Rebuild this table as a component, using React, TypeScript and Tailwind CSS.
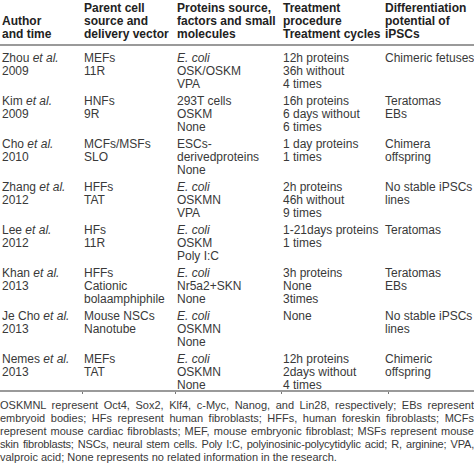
import React from 'react';

type Row = {
  author: React.ReactNode[];
  parent: React.ReactNode[];
  proteins: React.ReactNode[];
  treatment: React.ReactNode[];
  potential: React.ReactNode[];
};

const etal = <i>et al.</i>;
const ecoli = <i>E. coli</i>;

const rows: Row[] = [
  {
    author: [<>Zhou {etal}</>, '2009'],
    parent: ['MEFs', '11R'],
    proteins: [ecoli, 'OSK/OSKM', 'VPA'],
    treatment: ['12h proteins', '36h without', '4 times'],
    potential: ['Chimeric fetuses'],
  },
  {
    author: [<>Kim {etal}</>, '2009'],
    parent: ['HNFs', '9R'],
    proteins: ['293T cells', 'OSKM', 'None'],
    treatment: ['16h proteins', '6 days without', '6 times'],
    potential: ['Teratomas', 'EBs'],
  },
  {
    author: [<>Cho {etal}</>, '2010'],
    parent: ['MCFs/MSFs', 'SLO'],
    proteins: ['ESCs-', 'derivedproteins', 'None'],
    treatment: ['1 day proteins', '1 times'],
    potential: ['Chimera', 'offspring'],
  },
  {
    author: [<>Zhang {etal}</>, '2012'],
    parent: ['HFFs', 'TAT'],
    proteins: [ecoli, 'OSKMN', 'VPA'],
    treatment: ['2h proteins', '46h without', '9 times'],
    potential: ['No stable iPSCs', 'lines'],
  },
  {
    author: [<>Lee {etal}</>, '2012'],
    parent: ['HFs', '11R'],
    proteins: [ecoli, 'OSKM', 'Poly I:C'],
    treatment: ['1-21days proteins', '1 times'],
    potential: ['Teratomas'],
  },
  {
    author: [<>Khan {etal}</>, '2013'],
    parent: ['HFFs', 'Cationic', 'bolaamphiphile'],
    proteins: [ecoli, 'Nr5a2+SKN', 'None'],
    treatment: ['3h proteins', 'None', '3times'],
    potential: ['Teratomas', 'EBs'],
  },
  {
    author: [<>Je Cho {etal}</>, '2013'],
    parent: ['Mouse NSCs', 'Nanotube'],
    proteins: [ecoli, 'OSKMN', 'None'],
    treatment: ['None'],
    potential: ['No stable iPSCs', 'lines'],
  },
  {
    author: [<>Nemes {etal}</>, '2013'],
    parent: ['MEFs', 'TAT'],
    proteins: [ecoli, 'OSKMN', 'None'],
    treatment: ['12h proteins', '2days without', '4 times'],
    potential: ['Chimeric', 'offspring'],
  },
];

const headers: string[][] = [
  ['', 'Author', 'and time'],
  ['Parent cell', 'source and', 'delivery vector'],
  ['Proteins source,', 'factors and small', 'molecules'],
  ['Treatment', 'procedure', 'Treatment cycles'],
  ['Differentiation', 'potential of', 'iPSCs'],
];

const footnote = [
  'OSKMNL represent Oct4, Sox2, Klf4, c-Myc, Nanog, and Lin28, respectively; EBs represent',
  'embryoid bodies; HFs represent human fibroblasts; HFFs, human foreskin fibroblasts; MCFs',
  'represent mouse cardiac fibroblasts; MEF, mouse embryonic fibroblast; MSFs represent mouse',
];

const grid = 'grid grid-cols-[82px_93px_106px_102px_91px]';

const Cell: React.FC<{ lines: React.ReactNode[] }> = ({ lines }) => (
  <div className="pl-[2px] whitespace-nowrap">
    {lines.map((l, i) => (
      <div key={i} className="h-[13px]">{l}</div>
    ))}
  </div>
);

const App: React.FC = () => {
  return (
    <div className="w-[474px] h-[476px] bg-white overflow-hidden text-[12px] leading-[13px] text-[#393939] font-['Liberation_Sans',Arial,sans-serif]">
      {/* Header */}
      <div className={`${grid} pt-[2px] pb-[3px] font-bold text-[#222]`}>
        {headers.map((h, i) => (
          <Cell key={i} lines={h} />
        ))}
      </div>
      <div className="h-[2px] bg-[#9a9a9a]" />

      {/* Body */}
      {rows.map((r, i) => (
        <div key={i} className={`${grid} h-[43px] pt-[6px]`}>
          <Cell lines={r.author} />
          <Cell lines={r.parent} />
          <Cell lines={r.proteins} />
          <Cell lines={r.treatment} />
          <Cell lines={r.potential} />
        </div>
      ))}

      <div className="relative h-[2px] bg-[#9a9a9a]">
        <span className="absolute left-[82px] top-[2px] w-[1px] h-[2px] bg-[#777]" />
        <span className="absolute left-[175px] top-[2px] w-[1px] h-[2px] bg-[#777]" />
        <span className="absolute left-[281px] top-[2px] w-[1px] h-[2px] bg-[#777]" />
        <span className="absolute left-[388px] top-[2px] w-[1px] h-[2px] bg-[#777]" />
      </div>

      {/* Footnote */}
      <div className="pt-[7px] text-[11px] leading-[13px]">
        {footnote.map((t, i) => (
          <div key={i} className="whitespace-nowrap text-justify [text-align-last:justify]">
            {t}
          </div>
        ))}
        <div className="whitespace-nowrap text-justify [text-align-last:justify] tracking-[-0.2px]">
          skin fibroblasts; NSCs, neural stem cells. Poly I:C, polyinosinic-polycytidylic acid; R, arginine; VPA,
        </div>
        <div className="whitespace-nowrap">
          valproic acid; None represents no related information in the research.
        </div>
      </div>
    </div>
  );
};

export default App;
